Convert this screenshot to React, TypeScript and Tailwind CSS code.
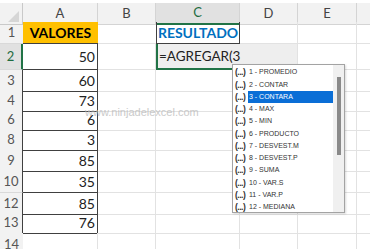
import React from 'react';

const cols = 'grid grid-cols-[23px_75px_58px_84px_58px_59px_1fr]';
const cellFont = { fontFamily: 'Lato, "Liberation Sans", sans-serif' };

const rows = [
  { n: '3', h: 'h-[20px]', v: '60' },
  { n: '4', h: 'h-[19px]', v: '73' },
  { n: '6', h: 'h-[20px]', v: '6' },
  { n: '8', h: 'h-[21px]', v: '3' },
  { n: '9', h: 'h-[21px]', v: '85' },
  { n: '10', h: 'h-[22px]', v: '35' },
  { n: '12', h: 'h-[19px]', v: '85' },
  { n: '13', h: 'h-[21px]', v: '76' },
];

const options = [
  '1 - PROMEDIO',
  '2 - CONTAR',
  '3 - CONTARA',
  '4 - MAX',
  '5 - MIN',
  '6 - PRODUCTO',
  '7 - DESVEST.M',
  '8 - DESVEST.P',
  '9 - SUMA',
  '10 - VAR.S',
  '11 - VAR.P',
  '12 - MEDIANA',
];

const Grid = () => <div className="border-r border-b border-[#e2e2e2]" />;

const RowHead = ({ n }: { n: string }) => (
  <div className="flex items-center justify-center border-b border-[#d9d9d9] bg-[#f2f2f2] text-[13px] text-[#555]">
    {n}
  </div>
);

const App = () => {
  return (
    <div className="relative h-[249px] w-[370px] overflow-hidden bg-white" style={cellFont}>
      <div className="h-[3px] bg-white" />

      {/* column headers */}
      <div className={`${cols} h-[19px] text-[13px] text-[#444]`}>
        <div className="relative border-r border-b border-[#c9c9c9] bg-[#f2f2f2]">
          <svg className="absolute right-[3px] bottom-[2px]" width="11" height="11" viewBox="0 0 11 11">
            <path d="M11 0 L11 11 L0 11 Z" fill="#d6d6d6" />
          </svg>
        </div>
        <div className="flex items-center justify-center border-r border-b border-[#d4d4d4] bg-[#f2f2f2]">A</div>
        <div className="flex items-center justify-center border-r border-b border-[#d4d4d4] bg-[#f2f2f2]">B</div>
        <div className="flex items-center justify-center border-r border-b-2 border-r-[#d4d4d4] border-b-[#217346] bg-[#e1e1e1] text-[#1e6b40]">C</div>
        <div className="flex items-center justify-center border-r border-b border-[#d4d4d4] bg-[#f2f2f2]">D</div>
        <div className="flex items-center justify-center border-r border-b border-[#d4d4d4] bg-[#f2f2f2]">E</div>
        <div className="border-b border-[#d4d4d4] bg-[#f2f2f2]" />
      </div>

      {/* row 1 */}
      <div className={`${cols} h-[22px]`}>
        <div className="flex items-center justify-center border-b border-[#d9d9d9] bg-[#f2f2f2] text-[13px] text-[#555]">1</div>
        <div className="flex items-center justify-center border-b border-[#404040] bg-[#ffc000] text-[14px] font-bold text-black">
          VALORES
        </div>
        <div className="border-b border-[#e2e2e2]" />
        <div className="flex items-center justify-center border-x border-b border-[#404040] text-[14px] font-bold text-[#0070c0]">
          RESULTADO
        </div>
        <Grid />
        <Grid />
        <div className="border-b border-[#e2e2e2]" />
      </div>

      {/* row 2 */}
      <div className={`${cols} h-[26px]`}>
        <div className="flex items-center justify-center border-r-2 border-b border-r-[#217346] border-b-[#d9d9d9] bg-[#e1e1e1] text-[13px] text-[#1e6b40]">
          2
        </div>
        <div className="flex items-center justify-end border-r border-b border-[#404040] pr-[2px] text-[14px] text-[#222]">50</div>
        <Grid />
        <div className="relative z-10 flex items-center border-2 border-r-0 border-t-0 border-[#217346] bg-[#eeeeee] pl-[1px] text-[13.5px] whitespace-nowrap text-[#222]">
          =AGREGAR(3
        </div>
        <div className="border-r border-[#e2e2e2] bg-[#eeeeee]" />
        <Grid />
        <div className="border-b border-[#e2e2e2]" />
      </div>

      {rows.map((r) => (
        <div key={r.n} className={`${cols} ${r.h}`}>
          <div className="flex items-center justify-center border-r border-b border-r-[#404040] border-b-[#d9d9d9] bg-[#f2f2f2] text-[13px] text-[#555]">
            {r.n}
          </div>
          <div className="flex items-center justify-end border-r border-b border-[#404040] pr-[2px] text-[14px] text-[#222]">
            {r.v}
          </div>
          <Grid />
          <Grid />
          <Grid />
          <Grid />
          <div className="border-b border-[#e2e2e2]" />
        </div>
      ))}

      {/* row 14 */}
      <div className={`${cols} h-[16px]`}>
        <div className="flex items-start justify-center bg-[#f2f2f2] pt-[2px] text-[13px] text-[#555]">14</div>
        <Grid />
        <Grid />
        <Grid />
        <Grid />
        <Grid />
        <div />
      </div>

      {/* watermark */}
      <div className="absolute top-[107px] left-[85px] text-[11px] leading-none text-[#bdbdbd] opacity-80" style={{ fontFamily: '"Liberation Sans", sans-serif' }}>
        www.ninjadelexcel.com
      </div>

      {/* function argument dropdown */}
      <div className="absolute top-[64px] left-[232px] z-20 flex h-[149px] w-[113px] border border-[#a3a3a3] bg-white shadow-[1px_1px_2px_rgba(0,0,0,0.15)]">
        <div className="flex-1 pt-[1.5px]" style={{ fontFamily: '"Liberation Sans", sans-serif' }}>
          {options.map((o, i) => (
            <div key={o} className="flex h-[12.25px] items-center">
              <span className="w-[15px] shrink-0 pl-[2px] text-[8.5px] font-bold leading-none tracking-[-0.5px] text-[#333]">
                (...)
              </span>
              <span
                className={
                  i === 2
                    ? 'flex h-full flex-1 items-center bg-[#0a6ed6] pl-[1px] text-[7px] text-white'
                    : 'flex h-full flex-1 items-center pl-[1px] text-[7px] text-[#333]'
                }
              >
                {o}
              </span>
            </div>
          ))}
        </div>
        <div className="flex w-[11px] justify-center bg-[#f0f0f0] pt-[12px]">
          <div className="h-[78px] w-[4px] bg-[#8a8a8a]" />
        </div>
      </div>
    </div>
  );
};

export default App;
